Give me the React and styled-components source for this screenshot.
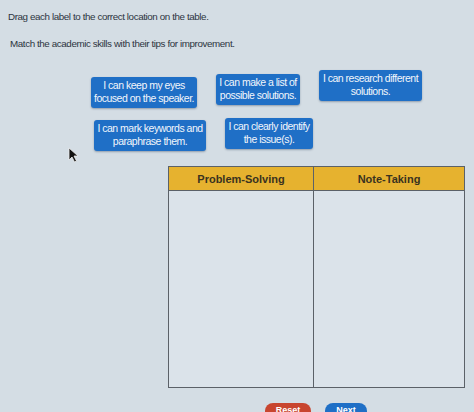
import React from 'react';
import styled, { createGlobalStyle } from 'styled-components';

const Global = createGlobalStyle`
  html, body { margin: 0; padding: 0; }
  body {
    background: #d4dde4;
    font-family: "Liberation Sans", Arial, sans-serif;
    width: 474px;
    height: 412px;
    overflow: hidden;
  }
`;

const Page = styled.div`
  position: relative;
  width: 474px;
  height: 412px;
  padding: 11px 0 0 8px;
  box-sizing: border-box;
  color: #2c3440;
`;

const Prompt = styled.p`
  margin: 0 0 ${p => p.$gap}px ${p => p.$indent}px;
  font-size: 9.8px;
  letter-spacing: -0.4px;
  line-height: 12px;
`;

const LabelRow = styled.div`
  display: flex;
  align-items: flex-start;
  gap: ${p => p.$gap}px;
  margin: ${p => p.$top}px 0 0 ${p => p.$left}px;
`;

const Label = styled.div`
  width: ${p => p.$w}px;
  margin-top: ${p => p.$dy || 0}px;
  background: #1f6fc6;
  color: #f2f6fb;
  border-radius: 3px;
  box-shadow: 0 1px 2px rgba(20, 40, 70, 0.35);
  padding: 2px 2px 3px;
  box-sizing: border-box;
  text-align: center;
  font-size: 10.5px;
  letter-spacing: -0.5px;
  line-height: 13px;
`;

const Cursor = styled.svg`
  position: absolute;
  left: 68px;
  top: 147px;
`;

const Table = styled.div`
  margin: 15px 0 0 160px;
  width: 297px;
  height: 222px;
  border: 1px solid #5b6168;
  display: grid;
  grid-template-columns: 145px 1fr;
  grid-template-rows: 24px 1fr;
  box-sizing: border-box;
`;

const Head = styled.div`
  background: #e6b22f;
  border-bottom: 1px solid #5b6168;
  border-right: ${p => (p.$first ? '1px solid #5b6168' : 'none')};
  display: flex;
  align-items: center;
  justify-content: center;
  font-weight: bold;
  font-size: 11px;
  color: #3a3320;
`;

const Cell = styled.div`
  background: #dbe3ea;
  border-right: ${p => (p.$first ? '1px solid #5b6168' : 'none')};
`;

const Buttons = styled.div`
  display: flex;
  gap: 14px;
  margin: 15px 0 0 257px;
`;

const Button = styled.div`
  width: ${p => p.$w}px;
  height: 20px;
  border-radius: 8px;
  background: ${p => p.$bg};
  color: #fff;
  font-size: 9px;
  font-weight: bold;
  text-align: center;
  padding-top: 2px;
  box-sizing: border-box;
`;

export default function App() {
  return (
    <>
      <Global />
      <Page>
        <Prompt $gap={15} $indent={0}>Drag each label to the correct location on the table.</Prompt>
        <Prompt $gap={0} $indent={2}>Match the academic skills with their tips for improvement.</Prompt>

        <LabelRow $gap={19} $left={83} $top={20}>
          <Label $w={106} $dy={7}>I can keep my eyes focused on the speaker.</Label>
          <Label $w={84} $dy={4}>I can make a list of possible solutions.</Label>
          <Label $w={103}>I can research different solutions.</Label>
        </LabelRow>
        <LabelRow $gap={19} $left={86} $top={10}>
          <Label $w={112} $dy={2}>I can mark keywords and paraphrase them.</Label>
          <Label $w={88}>I can clearly identify the issue(s).</Label>
        </LabelRow>

        <Cursor width="12" height="16" viewBox="0 0 12 16">
          <path d="M1 1 L1 13 L4 10 L6.5 15 L8.5 14 L6 9 L10 9 Z" fill="#111" stroke="#eee" strokeWidth="0.8" />
        </Cursor>

        <Table>
          <Head $first>Problem-Solving</Head>
          <Head>Note-Taking</Head>
          <Cell $first />
          <Cell />
        </Table>

        <Buttons>
          <Button $w={46} $bg="#c8452f">Reset</Button>
          <Button $w={42} $bg="#1f6fc6">Next</Button>
        </Buttons>
      </Page>
    </>
  );
}
